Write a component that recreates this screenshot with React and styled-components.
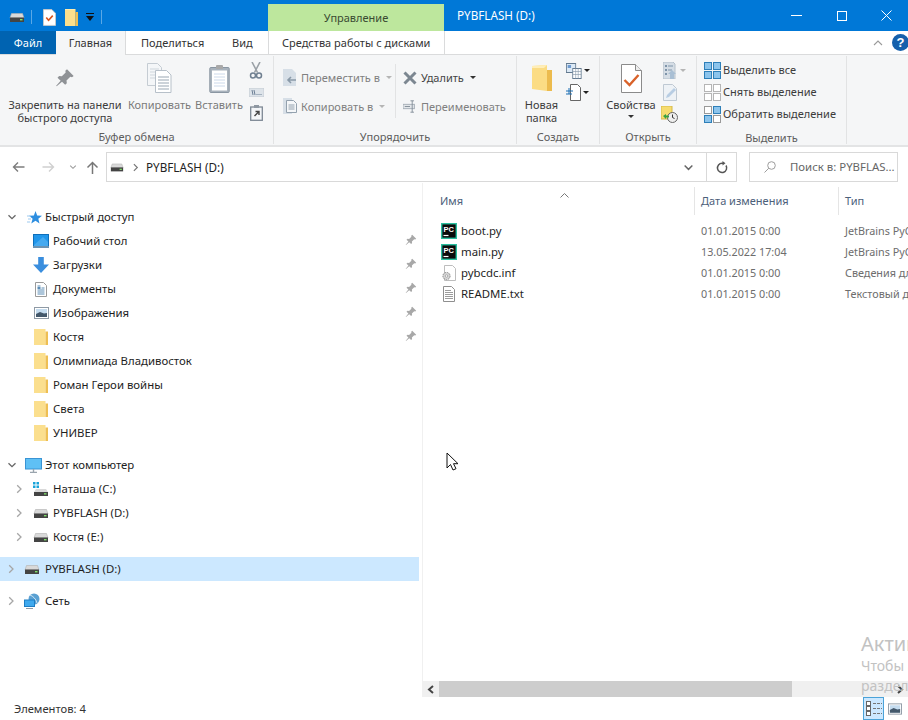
import React from "react";
import styled, { createGlobalStyle } from "styled-components";

const Global = createGlobalStyle`
  html, body { margin: 0; padding: 0; background: #fff; }
  * { box-sizing: border-box; }
`;

const Window = styled.div`
  position: relative; width: 908px; height: 720px; overflow: hidden; background: #fff;
  display: flex; flex-direction: column; color: #1e1e1e;
  font-family: "Noto Sans", "Open Sans", sans-serif; font-size: 11.4px; line-height: 14px;
`;
const Spacer = styled.span`
  width: ${p => p.$w}px; flex: none;
`;

/* ---------- title bar ---------- */
const TitleBar = styled.div`
  height: 31px; flex: none; background: #0078d7; display: flex; align-items: flex-end; color: #fff;
`;
const Qat = styled.div`
  width: 268px; height: 31px; padding: 3px 0 0 9px; display: flex; align-items: center;
`;
const QatSep = styled.span`
  width: 1px; height: 14px; background: #5aa8e6; margin: 0 ${p => p.$r || 9}px 0 ${p => p.$l || 8}px;
`;
const ContextTab = styled.div`
  width: 176px; height: 27px; background: #bde79d; color: #3a4a32; font-size: 11px;
  display: flex; align-items: center; justify-content: center; padding-top: 1px;
`;
const Title = styled.div`
  margin-left: 13px; height: 31px; display: flex; align-items: center; font-size: 11.7px; flex: 1; padding-bottom: 1px;
`;
const WinBtns = styled.div`
  display: flex; height: 31px; align-items: center; width: 138px; padding: 0 16px 0 21px; justify-content: space-between;
`;

/* ---------- tabs ---------- */
const TabsRow = styled.div`
  height: 24px; flex: none; display: flex; align-items: stretch; background: #fff; border-bottom: 1px solid #dadbdc;
  position: relative; font-size: 11px;
`;
const FileTab = styled.div`
  width: 56px; height: 23px; background: #0063b1; color: #fff; display: flex; align-items: center; justify-content: center;
`;
const HomeTab = styled.div`
  width: 70px; height: 24px; background: #f5f6f7; border-right: 1px solid #dadbdc; display: flex; align-items: center; justify-content: center;
  color: #333;
`;
const Tab = styled.div`
  display: flex; align-items: center; color: #333; padding-left: ${p => p.$pl}px; width: ${p => p.$w}px; height: 23px; flex: none;
`;
const ToolTab = styled.div`
  width: 177px; height: 23px; border-left: 1px solid #dadbdc; border-right: 1px solid #dadbdc;
  display: flex; align-items: center; padding-left: 13px; color: #333;
`;
const TabsRight = styled.div`
  margin-left: auto; display: flex; align-items: center; gap: 8px; height: 23px;
`;
const Help = styled.div`
  width: 17px; height: 17px; border-radius: 50%; background: #1560ac; color: #fff;
  font: bold 13px/17px "Liberation Sans", sans-serif; text-align: center; transform: translateX(1px);
`;

/* ---------- ribbon ---------- */
const Ribbon = styled.div`
  height: 92px; flex: none; background: #f5f6f7; border-bottom: 2px solid #e3e4e5; display: flex; color: #3c3c3c; font-size: 11px;
`;
const Group = styled.div`
  width: ${p => p.$w}px; flex: none; height: 88px; margin-top: 1px; border-right: 1px solid #e2e3e4; display: flex; flex-direction: column;
`;
const GroupBody = styled.div`
  flex: 1; display: flex; padding-left: ${p => p.$pl || 0}px;
`;
const GroupLabel = styled.div`
  height: 20px; flex: none; text-align: center; color: #5d5d5d; line-height: 15px; padding-top: 5px;
`;
const BigBtn = styled.div`
  width: ${p => p.$w}px; flex: none; display: flex; flex-direction: column; align-items: center; text-align: center;
  padding-top: 6px; color: ${p => p.$dim ? "#7a7a7a" : "#3c3c3c"}; line-height: 13px; white-space: nowrap;
`;
const BigIcon = styled.div`
  height: 32px; margin-bottom: 4px; display: flex; align-items: center; justify-content: center; flex: none;
`;
const SmallCol = styled.div`
  display: flex; flex-direction: column; align-items: ${p => p.$center ? "center" : "flex-start"}; gap: ${p => p.$gap}px; padding-top: 6px; width: ${p => p.$w}px; flex: none;
  margin-left: ${p => p.$ml || 0}px;
`;
const SmallRow = styled.div`
  display: flex; align-items: center; height: ${p => p.$h || 17}px; margin-left: ${p => p.$ml || 0}px;
`;
const MoveCol = styled.div`
  width: ${p => p.$w}px; flex: none; display: flex; flex-direction: column; gap: 12px; padding: 5px 0 0 ${p => p.$pl}px;
  border-right: ${p => p.$sep ? "1px solid #e2e3e4" : "none"}; height: 54px; margin-top: 8px;
`;
const MoveItem = styled.div`
  display: flex; align-items: center; gap: 4px; height: 17px; color: ${p => p.$dark ? "#444" : "#808080"}; white-space: nowrap;
`;
const SelectItem = styled.div`
  display: flex; align-items: center; gap: 2px; height: 22px; white-space: nowrap; color: #3c3c3c;
`;
const SelectCol = styled.div`
  display: flex; flex-direction: column; padding: 3px 0 0 7px;
`;
const Caret = styled.span`
  width: 0; height: 0; display: inline-block; flex: none; border-left: 3px solid transparent; border-right: 3px solid transparent;
  border-top: 3px solid ${p => p.$c || "#b5b5b5"}; margin-left: ${p => p.$ml || 2}px; margin-top: ${p => p.$mt || 0}px;
`;

/* ---------- address bar ---------- */
const AddressRow = styled.div`
  height: 36px; flex: none; display: flex; align-items: flex-start; padding-top: 5px;
`;
const NavBtns = styled.div`
  width: 106px; height: 30px; display: flex; align-items: center; padding-left: 12px; flex: none;
`;
const AddressBox = styled.div`
  width: 631px; height: 30px; flex: none; border: 1px solid #d9d9d9; display: flex; align-items: center;
`;
const Crumb = styled.div`
  flex: 1; display: flex; align-items: center; padding-left: 3px; font-size: 11.7px; color: #222;
`;
const AddrDrop = styled.span`
  margin-right: 12px; display: flex;
`;
const Refresh = styled.div`
  width: 30px; height: 28px; border-left: 1px solid #d9d9d9; display: flex; align-items: center; justify-content: center;
`;
const SearchBox = styled.div`
  width: 149px; height: 30px; margin-left: 12px; border: 1px solid #d9d9d9; display: flex; align-items: center; padding-left: 14px; gap: 14px; color: #666; white-space: nowrap;
`;

/* ---------- main ---------- */
const Main = styled.div`
  flex: 1; display: flex; min-height: 0; position: relative;
`;
const Tree = styled.div`
  width: 423px; flex: none; border-right: 1px solid #f0f0f0; padding-top: 22px;
`;
const TreeRow = styled.div`
  height: 24px; width: 419px; display: flex; align-items: center; color: #1e1e1e; position: relative;
  padding-left: ${p => p.$indent}px; margin-top: ${p => p.$mt || 0}px; background: ${p => p.$sel ? "#cce8ff" : "transparent"};
`;
const Chevron = styled.span`
  width: 12px; height: 12px; flex: none; display: flex; align-items: center; justify-content: center;
`;
const TreeIcon = styled.span`
  width: 18px; height: 18px; flex: none; display: flex; align-items: center; justify-content: center; margin: 0 ${p => p.$mr || 4}px 0 ${p => p.$ml || 0}px;
`;
const PinSlot = styled.span`
  position: absolute; right: 0; top: 5px; width: 14px; height: 14px;
`;
const List = styled.div`
  flex: 1; min-width: 0; display: flex; flex-direction: column; position: relative;
`;
const Header = styled.div`
  height: 32px; flex: none; display: grid; grid-template-columns: 272px 144px 1fr; position: relative; padding-top: 4px; color: #4c607a; font-size: 11px;
`;
const HeadCell = styled.div`
  height: 28px; padding-left: ${p => p.$pl}px; display: flex; align-items: center; border-right: ${p => p.$sep ? "1px solid #e5e5e5" : "none"};
`;
const SortArrow = styled.span`
  position: absolute; left: 137px; top: 4px;
`;
const Rows = styled.div`
  flex: 1; padding-top: 5px; min-height: 0;
`;
const FileRow = styled.div`
  height: 21px; display: grid; grid-template-columns: 272px 144px 1fr; align-items: center; white-space: nowrap; overflow: hidden;
`;
const NameCell = styled.div`
  display: flex; align-items: center; gap: 4px; padding-left: 18px; color: #1e1e1e;
`;
const MetaCell = styled.div`
  padding-left: 6px; color: #6d6d6d; overflow: hidden; font-size: 10.8px;
`;
const TypeCell = styled.div`
  color: #6d6d6d; padding-left: 6px; overflow: hidden; font-size: 10.8px;
`;
const HScroll = styled.div`
  height: 16px; flex: none; background: #f0f0f0; display: flex; align-items: center;
`;
const ScrollArrow = styled.div`
  width: 16px; height: 16px; flex: none; display: flex; align-items: center; justify-content: center; margin-left: ${p => p.$end ? "auto" : "0"};
`;
const Thumb = styled.div`
  width: 353px; height: 16px; background: #cdcdcd;
`;
const StatusBar = styled.div`
  height: 23px; flex: none; display: flex; align-items: center; padding-left: 14px; color: #333; font-size: 11.2px;
`;
const ViewBtns = styled.div`
  margin-left: auto; display: flex; align-items: center; margin-right: 4px; gap: 2px;
`;
const ViewBtn = styled.div`
  width: ${p => p.$on ? 21 : 18}px; height: 23px; display: flex; align-items: center; justify-content: center;
  background: ${p => p.$on ? "#cce8ff" : "transparent"}; border: ${p => p.$on ? "1px solid #4ba3d9" : "1px solid transparent"};
`;
const Watermark = styled.div`
  position: absolute; left: 861px; top: 631px; color: #c2c2c2; white-space: nowrap; pointer-events: none; font-size: 14px; line-height: 20px;
`;
const WatermarkBig = styled.div`
  font-size: 20px; line-height: 25px;
`;
const Cursor = styled.svg`
  position: absolute; left: 446px; top: 452px; pointer-events: none;
`;

/* ---------- icons ---------- */
const Drive = ({ w = 16 }) => (
  <svg width={w} height="12" viewBox="0 0 16 12">
    <path d="M2.5 2.5h11L15 7H1z" fill="#d9d9d9" stroke="#b0b0b0" strokeWidth=".6" />
    <rect x="1" y="6.5" width="14" height="4.5" fill="#444" />
    <rect x="11" y="8" width="2.5" height="1.4" fill="#7fe06a" />
  </svg>
);
const QuickProps = () => (
  <svg width="13" height="17" viewBox="0 0 14 18">
    <path d="M.5.5h9l4 4v13H.5z" fill="#fff" stroke="#c9c9c9" />
    <path d="M3.5 9l2.5 3 4.5-5" fill="none" stroke="#d9541e" strokeWidth="1.7" />
  </svg>
);
const FolderTall = () => (
  <svg width="13" height="17" viewBox="0 0 13 17">
    <path d="M0 0h10.5v17H0z" fill="#fbdf8c" />
    <path d="M10.5 3H13v14h-2.5z" fill="#eebf53" />
    <path d="M0 0h10.5L9 1H0z" fill="#ffedb0" />
  </svg>
);
const ChevDown = ({ c = "#666", s = 10 }) => (
  <svg width={s} height={s} viewBox="0 0 10 10"><path d="M1.5 3.2L5 6.7l3.5-3.5" fill="none" stroke={c} strokeWidth="1.3" /></svg>
);
const ChevRight = ({ c = "#a6a6a6", s = 10 }) => (
  <svg width={s} height={s} viewBox="0 0 10 10"><path d="M3.2 1.2L7 5 3.2 8.8" fill="none" stroke={c} strokeWidth="1.3" /></svg>
);
const PIN = "M7.2.8l4 4-1 .7-1-.3-2.3 2.3.2 1.6-1 1-1.9-1.9L1 11l-.3-.3 2.7-3.1-1.9-1.8 1-1 1.6.2L6.4 2.7l-.2-1z";
const Pin = () => (
  <svg width="12" height="12" viewBox="0 0 12 12"><path d={PIN} fill="#a8a8a8" /></svg>
);
const BigPin = () => (
  <svg width="20" height="20" viewBox="0 0 12 12"><path d={PIN} fill="#8f9296" /></svg>
);
const CopyBig = () => (
  <svg width="25" height="30" viewBox="0 0 25 30">
    <path d="M.5.5h10l4 4v18H.5z" fill="#f4f6f8" stroke="#c5ccd3" />
    <path d="M3 6h9M3 9h9M3 12h9M3 15h9" stroke="#cfd6dc" />
    <path d="M8.5 7.5h11l4.5 4.5v17.5H8.5z" fill="#fff" stroke="#b7c0c9" />
    <path d="M11 14h11M11 17h11M11 20h11M11 23h11M11 26h11" stroke="#9aa7b3" />
  </svg>
);
const PasteBig = () => (
  <svg width="21" height="29" viewBox="0 0 21 29">
    <rect x=".8" y="3.5" width="19.4" height="25" rx="1" fill="#a8b2bc" stroke="#8a96a2" />
    <rect x="3" y="6.5" width="15" height="20" fill="#fff" />
    <path d="M5 10h11M5 13h11M5 16h11M5 19h11M5 22h11" stroke="#ccd9ea" />
    <rect x="7" y="1" width="7" height="4" rx="1" fill="#a9a9a9" />
  </svg>
);
const Scissors = () => (
  <svg width="14" height="17" viewBox="0 0 14 17">
    <path d="M3 0l5.5 10.5M11 0L5.5 10.5" stroke="#9aa0a6" strokeWidth="1.6" fill="none" />
    <circle cx="4" cy="13.5" r="2.5" fill="none" stroke="#6f7f90" strokeWidth="1.5" />
    <circle cx="10" cy="13.5" r="2.5" fill="none" stroke="#6f7f90" strokeWidth="1.5" />
  </svg>
);
const PathIcon = () => (
  <svg width="15" height="9" viewBox="0 0 15 9">
    <rect width="15" height="9" fill="#dde3e9" stroke="#c6cdd4" />
    <path d="M3 2L4 7M5 2L6 7M8 6v1M10 6v1M12 6v1" stroke="#6d8096" fill="none" />
  </svg>
);
const PasteLink = () => (
  <svg width="13" height="16" viewBox="0 0 13 16">
    <rect x=".7" y="2" width="11.6" height="13.3" fill="#f4f6f8" stroke="#7d8894" strokeWidth="1.3" />
    <rect x="4" y="0" width="5" height="3" fill="#8f98a2" />
    <path d="M4.5 11L8.5 7M5.5 6.5h3.5V10" stroke="#444" strokeWidth="1.4" fill="none" />
  </svg>
);
const MoveIcon = () => (
  <svg width="14" height="17" viewBox="0 0 14 17">
    <path d="M0 0h9l4 4v13H0z" fill="#d7dfe7" />
    <path d="M13 11H5M8 8l-3 3 3 3" stroke="#8a9aa9" strokeWidth="1.6" fill="none" />
  </svg>
);
const CopyTo = () => (
  <svg width="14" height="17" viewBox="0 0 14 17">
    <path d="M0 0h9v16H0z" fill="#d7dfe7" />
    <path d="M3.5 2.5h7l3 3v9h-10z" fill="#f5f7f9" stroke="#93a1ae" />
    <path d="M5.5 7h6M5.5 9h6M5.5 11h6" stroke="#93a1ae" />
  </svg>
);
const XIcon = () => (
  <svg width="14" height="14" viewBox="0 0 14 14"><path d="M1.5 1.5l11 11M12.5 1.5l-11 11" stroke="#7c8791" strokeWidth="3" /></svg>
);
const RenameIcon = () => (
  <svg width="14" height="15" viewBox="0 0 16 15">
    <rect x="0" y="5" width="13" height="5" fill="#e2e6ea" stroke="#a1aab3" />
    <path d="M2 7.5h6" stroke="#7c8791" />
    <path d="M10.5 1v13M8.5 1h4M8.5 14h4" stroke="#7d8894" fill="none" />
  </svg>
);
const NewFolder = () => (
  <svg width="20" height="27" viewBox="0 0 20 27">
    <path d="M0 1l15-1v26L0 24z" fill="#fbdc84" />
    <path d="M15 5h5v21h-5z" fill="#ecbb4e" />
    <path d="M0 1l15-1-3 3H0z" fill="#ffeeb8" />
  </svg>
);
const NewItem = () => (
  <svg width="16" height="16" viewBox="0 0 19 16" preserveAspectRatio="none">
    <rect x=".5" y=".5" width="11" height="9" fill="#dce9f5" stroke="#647a90" />
    <rect x="2" y="2" width="4" height="3" fill="#6f9bd0" />
    <rect x="8" y="5.5" width="10" height="10" fill="#fff" stroke="#647a90" />
    <path d="M8 8.5h10M8 11.5h10M11.5 5.5v10M14.5 5.5v10" stroke="#8899aa" strokeWidth=".7" />
  </svg>
);
const EasyAccess = () => (
  <svg width="15" height="17" viewBox="0 0 15 17">
    <path d="M4.5.5h7l3 3v13h-10z" fill="#fff" stroke="#555" strokeWidth=".9" />
    <path d="M0 7h7M0 10h6M3 4v6" stroke="#1b6fb5" strokeWidth="1" fill="none" />
  </svg>
);
const PropsBig = () => (
  <svg width="21" height="29" viewBox="0 0 21 29">
    <path d="M.5.5h14l6 6v22H.5z" fill="#fff" stroke="#8b8b8b" />
    <path d="M14.5.5v6h6" fill="#eee" stroke="#8b8b8b" />
    <path d="M3.5 16l5 5 9-10" fill="none" stroke="#d9622a" strokeWidth="2.4" />
  </svg>
);
const OpenIcon = () => (
  <svg width="15" height="17" viewBox="0 0 15 17">
    <path d="M0 0h10l2 2v15H0z" fill="#d5dde5" stroke="#b5c0ca" />
    <path d="M2 3h2v2H2zM2 7h2v2H2zM2 11h2v2H2z" fill="#7f95aa" />
    <path d="M5 4h5M5 8h4" stroke="#7f95aa" />
    <path d="M7 17v-5H5l4-4 4 4h-2v5z" fill="#a9bfd4" />
  </svg>
);
const EditIcon = () => (
  <svg width="14" height="17" viewBox="0 0 14 17">
    <path d="M.5.5h9l4 4v12H.5z" fill="#eef2f6" stroke="#bfc9d3" />
    <path d="M3 14l1-3 7-7 2 2-7 7z" fill="#b8cde3" />
  </svg>
);
const HistoryIcon = () => (
  <svg width="17" height="17" viewBox="0 0 17 17">
    <rect x="0" y="0" width="11" height="13" fill="#f6dc6f" stroke="#d4b84a" />
    <circle cx="11.5" cy="11.5" r="5" fill="#eee" stroke="#666" />
    <path d="M11.5 8.5v3l2 1" stroke="#333" fill="none" />
    <path d="M2 10l3-2v1.5h3v2H5V13z" fill="#39a143" />
  </svg>
);
const SelAll = ({ kind }) => {
  const on = { all: [1, 1, 1, 1], none: [0, 0, 0, 0], inv: [0, 1, 1, 0] }[kind];
  const pos = [[0, 0], [9, 0], [0, 9], [9, 9]];
  const dim = kind === "none";
  return (
    <svg width="17" height="17" viewBox="0 0 17 17">
      {pos.map(([x, y], i) => (
        <rect key={i} x={x + .5} y={y + .5} width="7" height="7"
          fill={on[i] ? "#8cc4ec" : "#fff"} stroke={on[i] ? "#2e7fb8" : dim ? "#b5b5b5" : "#999"} />
      ))}
    </svg>
  );
};
const Star = () => (
  <svg width="15" height="15" viewBox="0 0 15 15">
    <path d="M8.5 1l1.7 4.4 4.8.3-3.7 3 1.2 4.8-4-2.7-4.2 2.7 1.3-4.8-3.5-3 4.8-.3z" fill="#2d8ee0" />
    <path d="M0 6h4M1 9h3M0 12h3" stroke="#9cc9ef" />
  </svg>
);
const Desktop = () => (
  <svg width="16" height="14" viewBox="0 0 16 14">
    <rect x=".5" y=".5" width="15" height="12" fill="#2196ea" stroke="#0f6fba" />
    <path d="M1 11l9-8 5 5v4H1z" fill="#46aaf0" />
    <rect y="12" width="16" height="2" fill="#6b93b3" />
  </svg>
);
const Download = () => (
  <svg width="16" height="16" viewBox="0 0 16 16"><path d="M5.2 0h5.6v7.5H16L8 16 0 7.5h5.2z" fill="#3a8ede" /></svg>
);
const Docs = () => (
  <svg width="12" height="15" viewBox="0 0 12 15">
    <path d="M.5.5h8l3 3v11H.5z" fill="#fff" stroke="#9a9a9a" />
    <path d="M2.5 4h3M6.5 6h3M2.5 8h7M2.5 10h7M2.5 12h7" stroke="#5b8cb5" />
    <rect x="2.5" y="5" width="3" height="2" fill="#5b8cb5" />
  </svg>
);
const Images = () => (
  <svg width="15" height="12" viewBox="0 0 15 12">
    <rect x=".5" y=".5" width="14" height="11" fill="#fff" stroke="#8f9aa5" />
    <rect x="2" y="2" width="11" height="8" fill="#c5dcef" />
    <path d="M2 7l4-2 4 1.5 3-.5v4H2z" fill="#44586b" />
  </svg>
);
const Folder = () => (
  <svg width="14" height="16" viewBox="0 0 14 16">
    <path d="M0 0h11.5v16H0z" fill="#fbdf8e" />
    <path d="M11.5 2.5H14V16h-2.5z" fill="#eebf53" />
  </svg>
);
const Computer = () => (
  <svg width="17" height="15" viewBox="0 0 17 15">
    <rect x=".5" y=".5" width="16" height="10.5" fill="#5fc0f5" stroke="#3a94d4" />
    <path d="M5 14.5h7M8.5 11v3.5" stroke="#9aa5ae" strokeWidth="1.4" />
  </svg>
);
const SystemDrive = () => (
  <svg width="16" height="14" viewBox="0 0 16 14">
    <path d="M0 0h2.5v2.5H0zM3.5 0H6v2.5H3.5zM0 3.5h2.5V6H0zM3.5 3.5H6V6H3.5z" fill="#1aa4d9" />
    <path d="M3 7h10l2 3H1z" fill="#d9d9d9" />
    <rect x="1" y="10" width="14" height="4" fill="#444" />
    <rect x="11" y="11.2" width="2.5" height="1.3" fill="#7fe06a" />
  </svg>
);
const Network = () => (
  <svg width="16" height="16" viewBox="0 0 16 16">
    <circle cx="10" cy="6" r="5.5" fill="#5aa0d2" />
    <path d="M6 2c3 1 6 4 7 8" stroke="#cfe6f5" fill="none" />
    <rect x=".5" y="7" width="10" height="6.5" fill="#3fa9ee" stroke="#1e7ec4" />
    <path d="M2 15.5h7" stroke="#8f9aa5" />
  </svg>
);
const PyCharm = () => (
  <svg width="16" height="16" viewBox="0 0 16 16">
    <rect x=".7" y=".7" width="14.6" height="14.6" fill="#0b0b0b" stroke="#2abf9f" strokeWidth="1.4" />
    <text x="2.4" y="8.6" fontFamily="Liberation Sans" fontSize="7.5" fontWeight="700" fill="#fff">PC</text>
    <path d="M2.5 12.5h5" stroke="#fff" strokeWidth="1.2" />
  </svg>
);
const InfFile = () => (
  <svg width="16" height="16" viewBox="0 0 16 16">
    <path d="M3.5.5h8l3 3v12h-11z" fill="#fff" stroke="#bdbdbd" />
    <circle cx="5.5" cy="11" r="3.6" fill="#d4d4d4" stroke="#8b8b8b" strokeDasharray="1.6 .8" />
    <circle cx="5.5" cy="11" r="1.2" fill="#fff" stroke="#8b8b8b" strokeWidth=".6" />
  </svg>
);
const TxtFile = () => (
  <svg width="16" height="16" viewBox="0 0 16 16">
    <path d="M2.5.5h8l3 3v12h-11z" fill="#fff" stroke="#8f8f8f" />
    <path d="M4 4.5h6M4 6.5h8M4 8.5h8M4 10.5h8M4 12.5h8" stroke="#9c9c9c" />
  </svg>
);

const QuickRow = ({ icon, label, pinned }) => (
  <TreeRow $indent={32}>
    <TreeIcon $mr={3}>{icon}</TreeIcon>
    {label}
    {pinned && <PinSlot><Pin /></PinSlot>}
  </TreeRow>
);
const DriveRow = ({ icon, label }) => (
  <TreeRow $indent={13}>
    <Chevron><ChevRight /></Chevron>
    <TreeIcon $ml={7} $mr={3}>{icon}</TreeIcon>
    {label}
  </TreeRow>
);
const File = ({ icon, name, date, type }) => (
  <FileRow>
    <NameCell>{icon}{name}</NameCell>
    <MetaCell>{date}</MetaCell>
    <TypeCell>{type}</TypeCell>
  </FileRow>
);

export default function App() {
  return (
    <Window>
      <Global />
      <TitleBar>
        <Qat>
          <Drive />
          <QatSep $l={6} $r={11} />
          <QuickProps />
          <Spacer $w={9} />
          <FolderTall />
          <Spacer $w={7} />
          <svg width="10" height="9" viewBox="0 0 10 9"><path d="M1 0h8v1H1z" fill="#111" /><path d="M1 3h8L5 8z" fill="#111" /></svg>
          <QatSep $l={6} />
        </Qat>
        <ContextTab>Управление</ContextTab>
        <Title>PYBFLASH (D:)</Title>
        <WinBtns>
          <svg width="11" height="11" viewBox="0 0 11 11"><path d="M0 5.5h11" stroke="#fff" /></svg>
          <svg width="10" height="10" viewBox="0 0 10 10"><rect x=".5" y=".5" width="9" height="9" fill="none" stroke="#fff" /></svg>
          <svg width="11" height="11" viewBox="0 0 11 11"><path d="M.5.5l10 10M10.5.5l-10 10" stroke="#fff" /></svg>
        </WinBtns>
      </TitleBar>

      <TabsRow>
        <FileTab>Файл</FileTab>
        <HomeTab>Главная</HomeTab>
        <Tab $pl={15} $w={106}>Поделиться</Tab>
        <Tab $pl={0} $w={36}>Вид</Tab>
        <ToolTab>Средства работы с дисками</ToolTab>
        <TabsRight>
          <svg width="10" height="6" viewBox="0 0 10 6"><path d="M1 5l4-4 4 4" fill="none" stroke="#9a9a9a" strokeWidth="1.1" /></svg>
          <Help>?</Help>
        </TabsRight>
      </TabsRow>

      <Ribbon>
        <Group $w={274}>
          <GroupBody $pl={3}>
            <BigBtn $w={124}><BigIcon><BigPin /></BigIcon>Закрепить на панели<br />быстрого доступа</BigBtn>
            <BigBtn $w={65} $dim><BigIcon><CopyBig /></BigIcon>Копировать</BigBtn>
            <BigBtn $w={54} $dim><BigIcon><PasteBig /></BigIcon>Вставить</BigBtn>
            <SmallCol $center $w={20} $gap={8.5}><Scissors /><PathIcon /><PasteLink /></SmallCol>
          </GroupBody>
          <GroupLabel>Буфер обмена</GroupLabel>
        </Group>
        <Group $w={243}>
          <GroupBody>
            <MoveCol $w={122} $pl={9} $sep>
              <MoveItem><MoveIcon />Переместить в<Caret /></MoveItem>
              <MoveItem><CopyTo />Копировать в<Caret /></MoveItem>
            </MoveCol>
            <MoveCol $w={120} $pl={7}>
              <MoveItem $dark><XIcon />Удалить<Caret $c="#333" /></MoveItem>
              <MoveItem><RenameIcon />Переименовать</MoveItem>
            </MoveCol>
          </GroupBody>
          <GroupLabel>Упорядочить</GroupLabel>
        </Group>
        <Group $w={83}>
          <GroupBody $pl={8}>
            <BigBtn $w={33}><BigIcon><NewFolder /></BigIcon>Новая<br />папка</BigBtn>
            <SmallCol $w={28} $gap={5} $ml={8}>
              <SmallRow><NewItem /><Caret $c="#222" $ml={2} /></SmallRow>
              <SmallRow><EasyAccess /><Caret $c="#222" $ml={2} /></SmallRow>
            </SmallCol>
          </GroupBody>
          <GroupLabel>Создать</GroupLabel>
        </Group>
        <Group $w={97}>
          <GroupBody $pl={6}>
            <BigBtn $w={50}>
              <BigIcon><PropsBig /></BigIcon>Свойства
              <Caret $c="#333" $ml={0.01} $mt={4} />
            </BigBtn>
            <SmallCol $w={24} $gap={5} $ml={7}>
              <SmallRow><OpenIcon /><Caret /></SmallRow>
              <SmallRow><EditIcon /></SmallRow>
              <SmallRow $ml={-2}><HistoryIcon /></SmallRow>
            </SmallCol>
          </GroupBody>
          <GroupLabel>Открыть</GroupLabel>
        </Group>
        <Group $w={150}>
          <GroupBody>
            <SelectCol>
              <SelectItem><SelAll kind="all" />Выделить все</SelectItem>
              <SelectItem><SelAll kind="none" />Снять выделение</SelectItem>
              <SelectItem><SelAll kind="inv" />Обратить выделение</SelectItem>
            </SelectCol>
          </GroupBody>
          <GroupLabel>Выделить</GroupLabel>
        </Group>
      </Ribbon>

      <AddressRow>
        <NavBtns>
          <svg width="13" height="12" viewBox="0 0 13 12"><path d="M12.5 6H1.5M6 1.5L1.5 6 6 10.5" fill="none" stroke="#7d7d7d" strokeWidth="1.4" /></svg>
          <Spacer $w={17} />
          <svg width="13" height="12" viewBox="0 0 13 12"><path d="M.5 6h11M7 1.5L11.5 6 7 10.5" fill="none" stroke="#d0d0d0" strokeWidth="1.4" /></svg>
          <Spacer $w={14} />
          <ChevDown c="#9a9a9a" s={8} />
          <Spacer $w={9} />
          <svg width="13" height="13" viewBox="0 0 13 13"><path d="M6.5 13V1.5M1.5 6.5l5-5 5 5" fill="none" stroke="#777" strokeWidth="1.5" /></svg>
        </NavBtns>
        <AddressBox>
          <Crumb>
            <Drive w={14} />
            <Spacer $w={7} />
            <ChevRight c="#777" s={9} />
            <Spacer $w={6} />
            PYBFLASH (D:)
          </Crumb>
          <AddrDrop><ChevDown c="#666" s={11} /></AddrDrop>
          <Refresh>
            <svg width="12" height="13" viewBox="0 0 12 13"><path d="M10 4.5A4.6 4.6 0 1 1 6 2.3h1.5" fill="none" stroke="#555" strokeWidth="1.5" /><path d="M6.5 0l3 2.3-3 2.3z" fill="#555" /></svg>
          </Refresh>
        </AddressBox>
        <SearchBox>
          <svg width="12" height="12" viewBox="0 0 12 12"><circle cx="7.5" cy="4.5" r="3.8" fill="none" stroke="#9d9d9d" /><path d="M4.8 7.2L.5 11.5" stroke="#9d9d9d" /></svg>
          Поиск в: PYBFLAS...
        </SearchBox>
      </AddressRow>

      <Main>
        <Tree>
          <TreeRow $indent={6}>
            <Chevron><ChevDown /></Chevron>
            <TreeIcon $ml={7} $mr={2}><Star /></TreeIcon>Быстрый доступ
          </TreeRow>
          <QuickRow icon={<Desktop />} label="Рабочий стол" pinned />
          <QuickRow icon={<Download />} label="Загрузки" pinned />
          <QuickRow icon={<Docs />} label="Документы" pinned />
          <QuickRow icon={<Images />} label="Изображения" pinned />
          <QuickRow icon={<Folder />} label="Костя" pinned />
          <QuickRow icon={<Folder />} label="Олимпиада Владивосток" />
          <QuickRow icon={<Folder />} label="Роман Герои войны" />
          <QuickRow icon={<Folder />} label="Света" />
          <QuickRow icon={<Folder />} label="УНИВЕР" />
          <TreeRow $indent={6} $mt={8}>
            <Chevron><ChevDown /></Chevron>
            <TreeIcon $ml={6} $mr={3}><Computer /></TreeIcon>Этот компьютер
          </TreeRow>
          <DriveRow icon={<SystemDrive />} label="Наташа (C:)" />
          <DriveRow icon={<Drive />} label="PYBFLASH (D:)" />
          <DriveRow icon={<Drive />} label="Костя (E:)" />
          <TreeRow $indent={5} $mt={8} $sel>
            <Chevron><ChevRight /></Chevron>
            <TreeIcon $ml={6} $mr={4}><Drive /></TreeIcon>PYBFLASH (D:)
          </TreeRow>
          <TreeRow $indent={5} $mt={8}>
            <Chevron><ChevRight /></Chevron>
            <TreeIcon $ml={6} $mr={4}><Network /></TreeIcon>Сеть
          </TreeRow>
        </Tree>
        <List>
          <Header>
            <SortArrow><svg width="9" height="5" viewBox="0 0 9 5"><path d="M.5 4.5l4-4 4 4" fill="none" stroke="#777" /></svg></SortArrow>
            <HeadCell $pl={17} $sep>Имя</HeadCell>
            <HeadCell $pl={6} $sep>Дата изменения</HeadCell>
            <HeadCell $pl={6}>Тип</HeadCell>
          </Header>
          <Rows>
            <File icon={<PyCharm />} name="boot.py" date="01.01.2015 0:00" type="JetBrains PyCharm" />
            <File icon={<PyCharm />} name="main.py" date="13.05.2022 17:04" type="JetBrains PyCharm" />
            <File icon={<InfFile />} name="pybcdc.inf" date="01.01.2015 0:00" type="Сведения для установки" />
            <File icon={<TxtFile />} name="README.txt" date="01.01.2015 0:00" type="Текстовый документ" />
          </Rows>
          <HScroll>
            <ScrollArrow><svg width="8" height="9" viewBox="0 0 8 9"><path d="M6 1L2 4.5 6 8" fill="none" stroke="#444" strokeWidth="2" /></svg></ScrollArrow>
            <Thumb />
            <ScrollArrow $end><svg width="8" height="9" viewBox="0 0 8 9"><path d="M2 1l4 3.5L2 8" fill="none" stroke="#444" strokeWidth="2" /></svg></ScrollArrow>
          </HScroll>
        </List>
      </Main>

      <StatusBar>
        Элементов: 4
        <ViewBtns>
          <ViewBtn $on>
            <svg width="16" height="16" viewBox="0 0 16 16">
              <rect x=".5" y=".5" width="4" height="4" fill="#fff" stroke="#666" />
              <rect x=".5" y="5.5" width="4" height="4" fill="#fff" stroke="#666" />
              <rect x=".5" y="10.5" width="4" height="4" fill="#fff" stroke="#666" />
              <path d="M7 2.5h9M7 7.5h9M7 12.5h9" stroke="#777" strokeDasharray="3 1" />
            </svg>
          </ViewBtn>
          <ViewBtn>
            <svg width="14" height="12" viewBox="0 0 15 12">
              <rect x=".5" y=".5" width="14" height="11" fill="#fff" stroke="#8f9aa5" />
              <rect x="2" y="2" width="11" height="8" fill="#c5dcef" />
              <path d="M2 7l4-2 4 1.5 3-.5v4H2z" fill="#44586b" />
            </svg>
          </ViewBtn>
        </ViewBtns>
      </StatusBar>

      <Watermark>
        <WatermarkBig>Активация Windows</WatermarkBig>
        <div>Чтобы активировать Windows, перейдите в</div>
        <div>раздел "Параметры".</div>
      </Watermark>

      <Cursor width="13" height="20" viewBox="0 0 13 20">
        <path d="M1 1v15l3.5-3.5L7 18l3-1.3-2.5-5H12z" fill="#fff" stroke="#111" strokeWidth="1" />
      </Cursor>
    </Window>
  );
}
